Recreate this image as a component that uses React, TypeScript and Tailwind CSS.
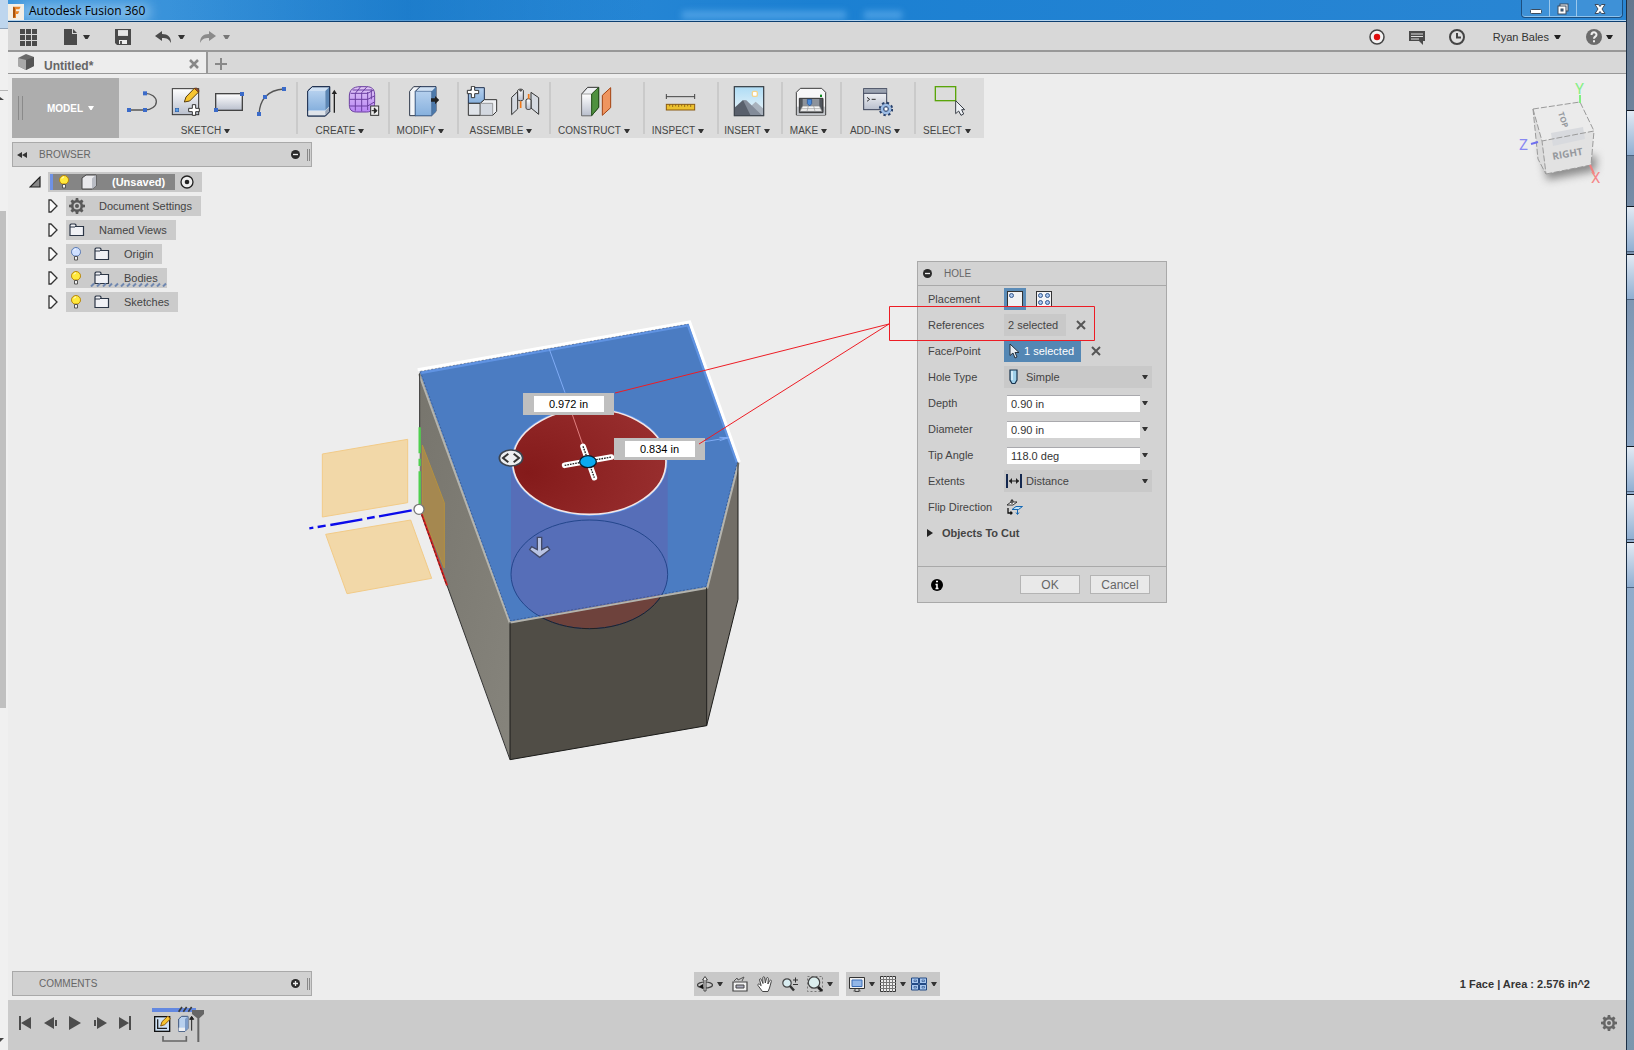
import React from 'react';

type IconProps = {
  box: string;
  className?: string;
  children: React.ReactNode;
};

const Icon = ({ box, className = 'w-8 h-8', children }: IconProps) => (
  <svg viewBox={box} className={`shrink-0 ${className}`} fill="none" aria-hidden="true">
    {children}
  </svg>
);

const Caret = ({ className = 'w-[6px] text-[#333]' }: { className?: string }) => (
  <svg viewBox="0 0 6 4" className={`shrink-0 ${className}`} aria-hidden="true">
    <path d="M0 0h6L3.6 4H2.4z" fill="currentColor" />
  </svg>
);

/* ---------- Toolbar icons ---------- */

const Dot = ({ x, y }: { x: number; y: number }) => (
  <rect x={x - 6} y={y - 6} width="12" height="12" fill="#3b6bc9" />
);

const LineIcon = () => (
  <Icon box="384 258 96 96">
    <path d="M390 330h48a34 25 0 0 0 0-50" stroke="#555" strokeWidth="4" />
    <Dot x={390} y={330} />
    <Dot x={438} y={330} />
    <Dot x={438} y={280} />
  </Icon>
);

const SketchIcon = () => (
  <Icon box="510 258 96 96">
    <rect x="517" y="266" width="79" height="78" fill="url(#metal)" stroke="#333" strokeWidth="3" />
    <rect x="526" y="325" width="10" height="10" fill="#5aa0e8" stroke="#2a5ea8" strokeWidth="2" />
    <path d="M553 306l5-15 25-26 13 11-27 27z" fill="#f7c530" stroke="#5a4010" strokeWidth="3" />
    <path d="M583 265l6-1 8 7-1 6z" fill="#a5522a" stroke="#5a3010" strokeWidth="2" />
    <path d="M577 314h10v11h11v10h-11v11h-10v-11h-11v-10h11z" fill="#fff" stroke="#333" strokeWidth="3" />
  </Icon>
);

const RectIcon = () => (
  <Icon box="639 258 96 96">
    <rect x="647" y="281" width="80" height="50" fill="url(#metal)" stroke="#444" strokeWidth="4" />
    <Dot x={648} y={330} />
    <Dot x={726} y={282} />
  </Icon>
);

const ArcIcon = () => (
  <Icon box="771 258 96 96">
    <path d="M780 341c2-24 8-38 18-50 14-15 34-23 57-24" stroke="#555" strokeWidth="4" />
    <Dot x={780} y={342} />
    <Dot x={798} y={291} />
    <Dot x={855} y={267} />
  </Icon>
);

const ExtrudeIcon = () => (
  <Icon box="912 258 96 96">
    <path d="M920 273l14-13h52v75l-13 13h-53z" fill="#cfe0f3" stroke="#1f3050" strokeWidth="3" />
    <path d="M920 273h53v58h-53z" fill="url(#blue)" />
    <path d="M973 273l13-13v58l-13 13z" fill="#5d87b5" />
    <path d="M920 333h53v14h-53z" fill="#dfe4ea" />
    <path d="M973 333l13-13v15l-13 13z" fill="#9aa5b5" />
    <path d="M920 273l14-13h52v75l-13 13h-53z" stroke="#1f3050" strokeWidth="3" />
    <path d="M1000 338v-62" stroke="#222" strokeWidth="4" />
    <path d="M992 282l8-13 8 13z" fill="#222" />
  </Icon>
);

const FormIcon = () => (
  <Icon box="1044 258 96 96">
    <path d="M1048 288c0-18 12-28 32-28h20c16 0 24 9 24 24v22c0 20-8 30-24 30h-30c-16 0-22-8-22-22z" fill="url(#purple)" stroke="#6b3fa0" strokeWidth="3" />
    <path d="M1066 280v52M1085 278v56M1049 298h54M1049 318h54M1103 276v54M1103 298l20-10M1103 318l20-12M1052 280h51l18-10M1066 280l16-20M1085 278l16-18M1114 268v30M1058 270h56" stroke="#6b3fa0" strokeWidth="3" />
    <rect x="1112" y="318" width="24" height="28" fill="#eee" stroke="#333" strokeWidth="3" />
    <path d="M1115 332h11M1123 324l8 8-8 8z" fill="#222" stroke="#222" strokeWidth="3" />
  </Icon>
);

const ModifyIcon = () => (
  <Icon box="1218 258 96 96">
    <path d="M1226 274l12-14h22l-15 14v73h-19z" fill="#f3f5f8" stroke="#2a3548" strokeWidth="3" />
    <path d="M1243 274l14-14h48v74l-13 13h-49z" fill="#cfe0f3" stroke="#1f3050" strokeWidth="3" />
    <path d="M1243 274h49v73h-49z" fill="url(#blue)" />
    <path d="M1292 274l13-14v74l-13 13z" fill="#4d79aa" />
    <path d="M1243 274h49v73h-49z" stroke="#3d5f8c" strokeWidth="2" />
    <path d="M1290 295h12v-7l13 12-13 13v-8h-12z" fill="#222" />
  </Icon>
);

const ComponentIcon = () => (
  <Icon box="1395 258 96 96">
    <path d="M1402 276l14-13h34v36l-12 11h-36z" fill="url(#blue)" stroke="#1f3050" strokeWidth="3" />
    <path d="M1402 310h36v36h-36z" fill="#dfe3e9" stroke="#333" strokeWidth="3" />
    <path d="M1438 310l12-11h37v35l-12 12h-37z" fill="#eef0f3" stroke="#333" strokeWidth="3" />
    <path d="M1438 310h37v36h-37z" fill="#d3d8e0" stroke="#777" strokeWidth="2" />
    <path d="M1411 259h10v12h12v10h-12v12h-10v-12h-12v-10h12z" fill="#fff" stroke="#333" strokeWidth="3" />
  </Icon>
);

const JointIcon = () => (
  <Icon box="27 78 96 96">
    <path d="M35 112l18-17v52l-18 17z" fill="#d5dae1" stroke="#333" strokeWidth="3" />
    <path d="M53 92c0-6 17-6 17 0v26c0 6-17 6-17 0z" fill="url(#metal)" stroke="#333" strokeWidth="3" />
    <circle cx="62" cy="91" r="4" fill="#555" />
    <path d="M93 97l23 16v50l-23-19z" fill="#d5dae1" stroke="#333" strokeWidth="3" />
    <path d="M78 120c0-5 15-5 15 0v24c0 6-15 6-15 0z" fill="url(#metal)" stroke="#333" strokeWidth="3" />
    <path d="M62 124v20M86 116v-14" stroke="#f07818" strokeWidth="5" />
  </Icon>
);

const ConstructIcon = () => (
  <Icon box="240 78 96 96">
    <path d="M245 102l18-20h33v60l-21 25h-30z" fill="#eef0f3" stroke="#333" strokeWidth="3" />
    <path d="M245 102h30v65h-30z" fill="url(#metal)" stroke="#777" strokeWidth="2" />
    <path d="M275 102l21-20v60l-21 25z" fill="#4f9140" stroke="#24501a" strokeWidth="3" />
    <path d="M307 106l25-23v60l-25 23z" fill="#ef9560" stroke="#a34312" strokeWidth="3" />
  </Icon>
);

const InspectIcon = () => (
  <Icon box="489 78 96 96">
    <path d="M496 110h85M496 102v15M581 102v15" stroke="#444" strokeWidth="3" />
    <rect x="496" y="133" width="85" height="17" fill="#ecc12f" stroke="#8a5a12" strokeWidth="3" />
    <path d="M506 134v5M515 134v7M524 134v5M533 134v7M542 134v5M551 134v7M560 134v5M569 134v7" stroke="#6b4510" strokeWidth="2" />
  </Icon>
);

const InsertIcon = () => (
  <Icon box="699 78 96 96">
    <rect x="703" y="80" width="88" height="87" fill="url(#sky)" stroke="#3c444c" strokeWidth="3" />
    <rect x="757" y="94" width="15" height="15" rx="4" fill="#fff" stroke="#f3d48c" strokeWidth="4" />
    <path d="M740 150l27-25 22 20v20h-50z" fill="#a9b2bd" />
    <path d="M705 142l24-22 52 46h-76z" fill="#59606c" />
    <path d="M729 120l10 1 46 44h-34z" fill="#848c99" />
    <rect x="703" y="80" width="88" height="87" stroke="#3c444c" strokeWidth="3" />
  </Icon>
);

const MakeIcon = () => (
  <Icon box="885 78 96 96">
    <path d="M889 97l12-12h64l12 12v68h-88z" fill="#f7f7f8" stroke="#3a3a3a" strokeWidth="3" />
    <path d="M891 140h84v25h-84z" fill="#c3c6cb" />
    <rect x="960" y="104" width="6" height="7" fill="#0d8a1e" />
    <path d="M898 115h71v43h-71z" fill="#50555c" stroke="#333" strokeWidth="3" />
    <path d="M908 117h50v22h-50z" fill="#8d939c" />
    <path d="M908 138h50l8 16h-66z" fill="#f4f4f4" stroke="#888" strokeWidth="2" />
    <path d="M922 118h13v13l-6 7-7-7z" fill="#4a8ad8" stroke="#1f4d90" strokeWidth="2" />
    <path d="M905 146h58M925 138l-4 16M941 138l4 16" stroke="#999" strokeWidth="2" />
  </Icon>
);

const Cog = ({ x, y, r, color }: { x: number; y: number; r: number; color: string }) => (
  <g stroke={color} fill="none">
    <circle cx={x} cy={y} r={r * 0.82} strokeWidth={r * 0.32} strokeDasharray={`${r * 0.322}`} />
    <circle cx={x} cy={y} r={r * 0.52} strokeWidth={r * 0.44} />
  </g>
);

const AddInsIcon = () => (
  <Icon box="1080 78 96 96">
    <rect x="1088" y="86" width="69" height="63" fill="url(#metal)" stroke="#3a4258" strokeWidth="3" />
    <path d="M1089 87h67v12h-67z" fill="#9aa2b0" />
    <path d="M1088 100h69" stroke="#3a4258" strokeWidth="3" />
    <path d="M1098 112l8 6-8 6M1112 118h12" stroke="#333" strokeWidth="3" />
    <Cog x={1155} y={147} r={22} color="#27406b" />
    <circle cx="1155" cy="147" r="12" fill="none" stroke="#9dbde6" strokeWidth="8" />
    <circle cx="1155" cy="147" r="6" fill="#fff" stroke="#27406b" strokeWidth="2" />
  </Icon>
);

const SelectIcon = () => (
  <Icon box="1296 78 96 96">
    <rect x="1303" y="80" width="61" height="42" stroke="#5aa50a" strokeWidth="4" />
    <path d="M1364 122v39l9-8 7 13 8-4-6-13h9z" fill="#eef1f5" stroke="#3a3f48" strokeWidth="3" />
  </Icon>
);

const groups = [
  { label: 'SKETCH', width: 'w-[177px]', icons: [LineIcon, SketchIcon, RectIcon, ArcIcon] },
  { label: 'CREATE', width: 'w-[92px]', icons: [ExtrudeIcon, FormIcon] },
  { label: 'MODIFY', width: 'w-[69px]', icons: [ModifyIcon] },
  { label: 'ASSEMBLE', width: 'w-[92px]', icons: [ComponentIcon, JointIcon] },
  { label: 'CONSTRUCT', width: 'w-[94px]', icons: [ConstructIcon] },
  { label: 'INSPECT', width: 'w-[74px]', icons: [InspectIcon] },
  { label: 'INSERT', width: 'w-[64px]', icons: [InsertIcon] },
  { label: 'MAKE', width: 'w-[59px]', icons: [MakeIcon] },
  { label: 'ADD-INS', width: 'w-[74px]', icons: [AddInsIcon] },
  { label: 'SELECT', width: 'w-[70px]', icons: [SelectIcon] },
];

const Gradients = () => (
  <svg className="absolute w-0 h-0" aria-hidden="true">
    <defs>
      <linearGradient id="metal" x1="0" y1="0" x2="0" y2="1">
        <stop offset="0" stopColor="#fff" />
        <stop offset="1" stopColor="#b9bfcd" />
      </linearGradient>
      <linearGradient id="blue" x1="0" y1="0" x2="0" y2="1">
        <stop offset="0" stopColor="#b5d0ee" />
        <stop offset="1" stopColor="#86b0dd" />
      </linearGradient>
      <linearGradient id="purple" x1="0" y1="0" x2="0" y2="1">
        <stop offset="0" stopColor="#e0c8f5" />
        <stop offset="1" stopColor="#b884f5" />
      </linearGradient>
      <linearGradient id="sky" x1="0" y1="0" x2="0" y2="1">
        <stop offset="0" stopColor="#aedcf5" />
        <stop offset="1" stopColor="#eef6fa" />
      </linearGradient>
      <linearGradient id="sideFace" x1="0" y1="0" x2="1" y2="1">
        <stop offset="0" stopColor="#77756d" />
        <stop offset="1" stopColor="#86847c" />
      </linearGradient>
      <radialGradient id="holeFace" cx="0.1" cy="0.6" r="1">
        <stop offset="0" stopColor="#841a1a" />
        <stop offset="1" stopColor="#9a3030" />
      </radialGradient>
    </defs>
  </svg>
);

/* ---------- Window chrome ---------- */

const TitleBar = () => (
  <div className="relative flex h-[22px] items-start justify-between overflow-hidden border-b border-[#0d3f70] bg-linear-to-r from-[#3f97dc] via-[#1b80d2] to-[#2a86d3] shadow-[inset_0_-1px_0_#b5d4ee]">
    <div className="absolute inset-y-0 left-[160px] w-[480px] bg-linear-to-r from-transparent via-[#1173c4]/60 to-transparent" />
    <div className="absolute left-[674px] top-[11px] h-2 w-[164px] bg-[#6bb4f0]/60 blur-[3px]" />
    <div className="absolute left-[856px] top-[11px] h-2 w-[38px] bg-[#6bb4f0]/60 blur-[3px]" />
    <div className="relative flex items-center">
      <div className="absolute left-3 top-1 h-4 w-[130px] bg-[#a9d2f3]/60 blur-[6px]" />
      <svg viewBox="0 0 48 48" className="relative mt-[3px] h-4 w-4" aria-hidden="true">
        <rect width="48" height="48" fill="#f3efe6" />
        <path d="M15 8h23l-4 8H24v6h10l-4 8h-6v12h-9z" fill="#e8852a" />
        <path d="M15 8l6 3v29l-6 2z" fill="#a8550f" />
      </svg>
      <h1 className="relative ml-[5px] mt-[2px] font-['Open_Sans',sans-serif] text-xs leading-[18px] text-black">Autodesk Fusion 360</h1>
    </div>
    <div className="relative mr-[3px] flex h-[18px] rounded-b-[4px] border border-t-0 border-[#1c4f80] bg-[#4d9adb]/60 shadow-[inset_0_-1px_0_#8fc3ec]">
      <button type="button" aria-label="Minimize" className="grid w-7 place-items-center border-r border-[#9bc8ec]">
        <svg viewBox="0 0 12 6" className="mt-1 h-[6px] w-3"><rect x=".5" y="1.500" width="11" height="4" rx="1" fill="#fff" stroke="#3b4a5c" /></svg>
      </button>
      <button type="button" aria-label="Restore" className="grid w-[27px] place-items-center border-r border-[#9bc8ec]">
        <svg viewBox="0 0 12 12" className="h-3 w-3" fill="none">
          <rect x="3" y="1" width="8" height="7" fill="#fff" stroke="#3b4a5c" />
          <rect x="1" y="3" width="8" height="8" fill="#fff" stroke="#3b4a5c" />
          <rect x="4" y="6" width="2" height="2" fill="#3a86c8" stroke="#3b4a5c" />
        </svg>
      </button>
      <button type="button" aria-label="Close" className="grid w-[45px] place-items-center">
        <svg viewBox="0 0 12 10" className="h-[10px] w-3">
          <path d="M1 .5h3.500l1.500 2 1.500-2H11L8 5l3 4.500H7.500L6 7.500l-1.500 2H1L4 5z" fill="#fff" stroke="#3b4a5c" />
        </svg>
      </button>
    </div>
  </div>
);

const MenuBar = () => (
  <header className="flex h-[30px] items-center justify-between border-b-2 border-[#989898] bg-[#d8d8d8] pl-3 pr-[13px] pt-[2px]">
    <div className="flex items-center text-[#4a4a4a]">
      <button type="button" aria-label="Data panel">
        <Icon box="0 0 17 17" className="h-[17px] w-[17px]">
          <path d="M0 0h5v5H0zM6 0h5v5H6zM12 0h5v5h-5zM0 6h5v5H0zM6 6h5v5H6zM12 6h5v5h-5zM0 12h5v5H0zM6 12h5v5H6zM12 12h5v5h-5z" fill="currentColor" />
        </Icon>
      </button>
      <button type="button" aria-label="File" className="ml-[27px] flex items-center gap-[6px]">
        <Icon box="0 0 13 16" className="h-4 w-[13px]">
          <path d="M0 0h8v5h5v11H0zM9 0l4 4H9z" fill="currentColor" />
        </Icon>
        <Caret className="w-[7px] text-[#333]" />
      </button>
      <button type="button" aria-label="Save" className="ml-[25px]">
        <Icon box="0 0 16 16" className="h-4 w-4">
          <path d="M0 0h16v16H2l-2-2zM3 1v6h10V1zM4 11v4h8v-4z" fill="currentColor" fillRule="evenodd" />
          <path d="M3 2h10v4H3z" fill="#e6e6e6" />
          <path d="M4 11h8v4H4z" fill="#eee" />
          <path d="M5 12h2v3H5z" fill="#555" />
        </Icon>
      </button>
      <button type="button" aria-label="Undo" className="ml-6 flex items-center gap-[7px]">
        <Icon box="0 0 16 12" className="h-3 w-4">
          <path d="M0 5l7-5v3c6 0 9 3 9 9-2-4-4-5-9-5v3z" fill="currentColor" />
        </Icon>
        <Caret className="w-[7px] text-[#333]" />
      </button>
      <button type="button" aria-label="Redo" className="ml-[15px] flex items-center gap-[7px] text-[#8a8a8a]">
        <Icon box="0 0 16 12" className="h-3 w-4">
          <path d="M16 5L9 0v3C3 3 0 6 0 12c2-4 4-5 9-5v3z" fill="currentColor" />
        </Icon>
        <Caret className="w-[7px] text-[#777]" />
      </button>
    </div>
    <div className="flex items-center text-[#4a4a4a]">
      <button type="button" aria-label="Record">
        <Icon box="0 0 16 16" className="h-4 w-4">
          <circle cx="8" cy="8" r="7" fill="#f3f3f3" stroke="#444" strokeWidth="1.500" />
          <circle cx="8" cy="8" r="3.200" fill="#e00d0d" />
        </Icon>
      </button>
      <button type="button" aria-label="Comments" className="ml-6">
        <Icon box="0 0 16 15" className="h-[15px] w-4">
          <path d="M0 1h16v10h-2v4l-4-4H0z" fill="currentColor" />
          <path d="M2 4h12M2 6.500h12M2 9h8" stroke="#ddd" />
        </Icon>
      </button>
      <button type="button" aria-label="Job status" className="ml-6">
        <Icon box="0 0 16 16" className="h-4 w-4">
          <circle cx="8" cy="8" r="7" fill="#e0e0e0" stroke="#444" strokeWidth="2" />
          <path d="M8 4v4.500h4" stroke="#444" strokeWidth="2" />
        </Icon>
      </button>
      <button type="button" className="ml-7 flex items-center gap-[5px] text-[11px] text-[#333]">
        Ryan Bales
        <Caret className="w-[7px] text-[#222]" />
      </button>
      <button type="button" aria-label="Help" className="ml-[25px] flex items-center gap-1">
        <svg viewBox="0 0 16 16" className="h-4 w-4" aria-hidden="true">
          <circle cx="8" cy="8" r="8" fill="#6b6b6b" />
          <path d="M5.500 6c0-3.500 5-3.500 5-.3 0 2-2.500 1.800-2.500 4M8 11.200v2" fill="none" stroke="#eee" strokeWidth="2" />
        </svg>
        <Caret className="w-[7px] text-[#222]" />
      </button>
    </div>
  </header>
);

const TabBar = () => (
  <div className="flex h-[22px] border-b border-[#989898] bg-[#d8d8d8]">
    <div className="flex w-[200px] items-center border-r-2 border-[#989898] bg-[#ededed] pl-[10px] pr-[7px] pt-[2px]">
      <Icon box="0 0 16 16" className="mb-1 h-4 w-4">
        <path d="M0 4l8-4 8 3v9l-8 4-8-4z" fill="#6a6a6a" />
        <path d="M0 4l8 2v10l-8-4z" fill="#a8a8a8" />
        <path d="M8 6l8-3v9l-8 4z" fill="#555" />
      </Icon>
      <span className="ml-[10px] mt-1 flex-1 text-xs leading-4 font-bold text-[#666]">Untitled*</span>
      <button type="button" aria-label="Close tab">
        <Icon box="0 0 10 10" className="h-[10px] w-[10px]">
          <path d="M1 1l8 8M9 1L1 9" stroke="#888" strokeWidth="2.500" />
        </Icon>
      </button>
    </div>
    <button type="button" aria-label="New tab" className="ml-[7px] pt-[2px]">
      <Icon box="0 0 12 12" className="h-3 w-3">
        <path d="M6 0v12M0 6h12" stroke="#888" strokeWidth="2" />
      </Icon>
    </button>
  </div>
);

const Toolbar = () => (
  <div className="mx-1 mt-1 flex h-[60px] self-start bg-[#dcdcdc]">
    <button type="button" className="flex w-[107px] items-center bg-[#adadad] pl-[6px] text-[10px] font-bold text-white">
      <span className="mr-6 h-6 w-[5px] border-x border-[#8a8a8a]" />
      MODEL
      <Caret className="ml-[5px] w-[6px] text-white" />
    </button>
    {groups.map(({ label, width, icons }, i) => (
      <section key={label} className={`relative flex flex-col items-center pt-2 ${width}`}>
        {i > 0 && <span className="absolute left-0 top-1 h-[52px] w-[2px] bg-[#cacaca]" />}
        <div className="flex gap-[11px]">
          {icons.map((ToolIcon, n) => (
            <button key={n} type="button" aria-label={`${label} tool ${n + 1}`}>
              <ToolIcon />
            </button>
          ))}
        </div>
        <button type="button" className="mt-[6px] flex items-center gap-[3px] pr-1 text-[10px] leading-[14px] text-[#444]">
          {label}
          <Caret />
        </button>
      </section>
    ))}
  </div>
);

/* ---------- Browser tree ---------- */

const Grip = () => <span className="h-3 w-[3px] border-x border-[#888]" />;

const RoundSign = ({ plus = false, className = 'h-[9px] w-[9px]' }: { plus?: boolean; className?: string }) => (
  <Icon box="0 0 9 9" className={className}>
    <circle cx="4.500" cy="4.500" r="4.500" fill="#2b2b2b" />
    <path d={plus ? 'M2 4.500h5M4.500 2v5' : 'M2 4.500h5'} stroke="#eee" strokeWidth="1.300" />
  </Icon>
);

const Bulb = ({ off = false }: { off?: boolean }) => (
  <Icon box="0 0 10 14" className="h-[14px] w-[10px]">
    <path d="M3 9C1 7.500.500 6.500.500 4.800a4.500 4.300 0 0 1 9 0C9.500 6.500 9 7.500 7 9z" fill={off ? '#cfe0ff' : '#ffe93d'} stroke={off ? '#5d7db5' : '#b8860b'} />
    <path d="M3.500 9.500h3v3.500h-3z" fill="#f2f2f2" stroke="#555" />
    <path d="M3 3.500c.5-1 1-1.500 2-1.500" stroke="#fff" />
  </Icon>
);

const Folder = () => (
  <Icon box="0 0 16 14" className="h-[14px] w-4">
    <path d="M1 12.500V2l1-1h4l1 1v1.500h7.500v9z" fill="#f0f1f5" stroke="#2c3646" strokeWidth="1.200" />
    <path d="M1 4h5l1-1" stroke="#2c3646" />
  </Icon>
);

const Gear = ({ className = 'h-4 w-4', color = '#5a5a5a' }: { className?: string; color?: string }) => (
  <Icon box="0 0 16 16" className={className}>
    <path
      d="M6.800 0h2.400l.4 2.200 1.300.5L12.700 1.500l1.800 1.800-1.200 1.800.5 1.300 2.200.4v2.400l-2.200.4-.5 1.300 1.200 1.800-1.800 1.800-1.800-1.200-1.300.5-.4 2.200H6.800l-.4-2.200-1.300-.5-1.800 1.200-1.800-1.800 1.200-1.800-.5-1.300L0 9.200V6.800l2.200-.4.5-1.300L1.500 3.300l1.800-1.800 1.800 1.200 1.300-.5zM8 4.500a3.500 3.500 0 1 0 0 7 3.500 3.500 0 0 0 0-7z"
      fill={color}
      fillRule="evenodd"
    />
    <circle cx="8" cy="8" r="2" fill={color} />
  </Icon>
);

const Expander = () => (
  <button type="button" aria-label="Expand">
    <Icon box="0 0 10 14" className="h-[14px] w-[10px]">
      <path d="M1 1h2l6 6-6 6H1z" fill="#fafafa" stroke="#333" strokeWidth="1.300" />
    </Icon>
  </button>
);

const treeRows = [
  { name: 'Document Settings', icon: 'gear' },
  { name: 'Named Views', icon: 'folder' },
  { name: 'Origin', icon: 'folder', bulb: 'off' },
  { name: 'Bodies', icon: 'folder', bulb: 'on', edited: true },
  { name: 'Sketches', icon: 'folder', bulb: 'on' },
];

const Hatch = () => (
  <svg className="absolute bottom-px left-6 h-[5px] w-[77px]" viewBox="0 0 77 5" aria-hidden="true">
    {[...Array(13)].map((_, i) => (
      <path key={i} d={`M${1 + i * 6} 4.500l3-3`} stroke="#6f87b0" strokeWidth="2" />
    ))}
  </svg>
);

const Browser = () => (
  <aside className="ml-1 mt-1 w-[300px] text-[11px] text-[#444]">
    <div className="flex h-[25px] items-center border border-[#a9a9a9] bg-[#d1d1d1] pl-1 pr-[1px]">
      <button type="button" aria-label="Collapse browser">
        <Icon box="0 0 10 6" className="h-[6px] w-[10px]">
          <path d="M5 0v6L0 3zM10 0v6L5 3z" fill="#333" />
        </Icon>
      </button>
      <h2 className="ml-3 flex-1 text-[10px] text-[#666]">BROWSER</h2>
      <button type="button" aria-label="Minimize browser" className="mr-[7px]"><RoundSign /></button>
      <Grip />
    </div>
    <div className="mt-[5px] flex items-center pl-[17px]">
      <button type="button" aria-label="Collapse" className="mr-[7px]">
        <Icon box="0 0 12 12" className="h-3 w-3">
          <path d="M11 1v10H1z" fill="#888" stroke="#222" strokeWidth="1.200" />
        </Icon>
      </button>
      <div className="flex h-5 items-center bg-[#c9c9c9] pl-[2px] pr-2">
        <div className="flex h-4 items-center border-l-3 border-[#6f92e6] bg-[#858585] pl-[6px] pr-[10px]">
          <Bulb />
          <Icon box="0 0 16 16" className="ml-3 h-4 w-4">
            <path d="M1 4l4-3h10v11l-4 3H1z" fill="#e9e9ec" stroke="#444" />
            <path d="M11 4.500l4-3.500v11l-4 3z" fill="#b9bcc4" />
          </Icon>
          <span className="ml-[15px] font-bold text-white">(Unsaved)</span>
        </div>
        <button type="button" aria-label="Activate component" className="ml-[5px]">
          <Icon box="0 0 14 14" className="h-[14px] w-[14px]">
            <circle cx="7" cy="7" r="6" fill="#eee" stroke="#222" strokeWidth="1.300" />
            <circle cx="7" cy="7" r="2.300" fill="#222" />
          </Icon>
        </button>
      </div>
    </div>
    <ul className="mt-1 flex flex-col gap-1 pl-9">
      {treeRows.map((row) => (
        <li key={row.name} className="flex items-center gap-2">
          <Expander />
          <div className="relative flex h-5 items-center bg-[#cbcbcb] pl-[3px] pr-[9px]">
            {row.bulb && (
              <button type="button" aria-label={`Toggle ${row.name}`} className="ml-[2px] mr-[13px]">
                <Bulb off={row.bulb === 'off'} />
              </button>
            )}
            {row.icon === 'gear' ? <Gear /> : <Folder />}
            <span className="ml-[14px]">{row.name}</span>
            {row.edited && <Hatch />}
          </div>
        </li>
      ))}
    </ul>
  </aside>
);

/* ---------- Canvas scene ---------- */

const Scene = () => (
  <svg viewBox="0 0 1380 1380" className="absolute left-[292px] top-[236px] h-[460px] w-[460px]" fill="none" aria-hidden="true">
    {/* origin planes */}
    <path d="M67 432l256-44v190L67 621z" fill="#f2d8a8" stroke="#f2cb88" strokeWidth="3" />
    <path d="M77 673l255-43 63 175-254 46z" fill="#f2d8a8" stroke="#f2cb88" strokeWidth="3" />
    {/* body */}
    <path d="M359 185l271 750v413L359 600z" fill="url(#sideFace)" />
    <path d="M630 935l590-104v416l-590 102z" fill="#504d46" />
    <path d="M1220 831l94-375v412l-94 379z" fill="#726e67" />
    <path d="M367 405l66 173v196l-66-162z" fill="#a58850" stroke="#b5913f" strokeWidth="3" />
    <path d="M359 185l808-144 147 415-94 375-590 104z" fill="#4b7cc2" />
    <path d="M361 189l803-143 147 412" stroke="#6093e2" strokeWidth="7" />
    {/* hole preview */}
    <path d="M633 455v338a235 163 0 0 0 470 0V455z" fill="#5a6ab4" fillOpacity=".75" />
    <clipPath id="frontFace"><path d="M630 935l590-104v416l-590 102z" /></clipPath>
    <ellipse cx="868" cy="793" rx="235" ry="163" fill="#6e423c" clipPath="url(#frontFace)" />
    <ellipse cx="868" cy="793" rx="235" ry="163" stroke="#23468c" strokeWidth="3" />
    <ellipse cx="868" cy="793" rx="235" ry="163" stroke="#222" strokeWidth="3" clipPath="url(#frontFace)" />
    <ellipse cx="868" cy="455" rx="235" ry="163" fill="#5b93ea" />
    <ellipse cx="868" cy="455" rx="230" ry="158" fill="url(#holeFace)" stroke="#f4e6e4" strokeWidth="5" />
    {/* edges */}
    <path d="M353 179l816-143 149 420" stroke="#fff" strokeWidth="9" />
    <path d="M357 192l272 746 593-104 94-376" stroke="#b4b4ae" strokeWidth="6" />
    <path d="M361 185l270 747 587-103 94-373M361 184l804-142" stroke="#23355a" strokeOpacity=".6" strokeWidth="2" strokeDasharray="6 5" />
    <path d="M630 937v412l590-102V833M1314 458v410l-94 379" stroke="#1c1c1a" strokeWidth="3" />
    <path d="M359 190v170M441 826l189 523" stroke="#333" strokeWidth="3" />
    {/* axes */}
    <path d="M359 352v78M359 446v22M359 484v98" stroke="#4fd04f" strokeWidth="7" />
    <path d="M365 612l76 214" stroke="#d81e1e" strokeWidth="6" />
    <path d="M365 615l76 214" stroke="#222" strokeWidth="2" strokeDasharray="8 6" />
    <path d="M335 601l-98 18M224 621l-23 4M187 628l-96 17M77 647l-24 4M40 653l-12 2" stroke="#0b0bea" strokeWidth="7" />
    <circle cx="357" cy="598" r="15" fill="#fff" stroke="#777" strokeWidth="4" />
    {/* reference lines */}
    <path d="M747 115l48 133" stroke="#7fabf5" strokeWidth="3" />
    <path d="M817 314l32 92" stroke="#e08080" strokeWidth="3" />
    <path d="M1214 395l72-12M1258 382l28 1-27 9" stroke="#7fabf5" strokeWidth="3" />
    {/* move manipulator */}
    <path d="M849 409l34 94M794 466l140-25" stroke="#fff" strokeWidth="17" strokeLinecap="round" />
    <path d="M849 409l34 94M794 466l140-25" stroke="#222" strokeWidth="4" strokeDasharray="5 3" />
    <ellipse cx="864" cy="455" rx="25" ry="18" fill="#09a9f0" stroke="#0a1a28" strokeWidth="4" />
    {/* diameter handle */}
    <ellipse cx="633" cy="444" rx="35" ry="24" fill="#eceef0" stroke="#3c4450" strokeWidth="5" />
    <path d="M625 431l-16 13 16 13M641 431l16 13-16 13" stroke="#333" strokeWidth="6" />
    {/* depth handle */}
    <path d="M712 682h13v37l18-9 6 9-30 23-30-23 6-9 17 9z" fill="#b9c4e4" stroke="#434a68" strokeWidth="4" />
  </svg>
);

const ViewCube = () => (
  <svg viewBox="0 0 90 110" className="absolute right-[21px] top-[6px] h-[110px] w-[90px]" fill="none" aria-label="View cube">
    <path d="M26 66l6 34 48-9 2-14z" fill="#8a8a8a" className="blur-[4px]" />
    <path d="M18 29l47-7 14 29-52 10z" fill="#ebebeb" />
    <path d="M18 29l9 32 4 33-8-15z" fill="#dcdcdc" />
    <path d="M27 61l52-10-3 34-45 9z" fill="#e2e2e2" />
    <path d="M36 53l32-6 2 12-32 7z" fill="#d8dade" />
    <path d="M18 29l47-7 14 29-52 10zM18 29l5 50 8 15-4-33M31 94l45-9 3-34" stroke="#9a9a9a" strokeDasharray="6 2" />
    <path d="M65 15v8" stroke="#80f080" strokeWidth="2" />
    <path d="M16 64l7-2" stroke="#7070f0" strokeWidth="2" />
    <path d="M75 85l4 9" stroke="#f08080" strokeWidth="2" />
    <g className="font-[Roboto,sans-serif] text-[15px]">
      <text x="60" y="14" fill="#86f086">Y</text>
      <text x="4" y="70" fill="#8888f2">Z</text>
      <text x="76" y="103" fill="#f58888">X</text>
    </g>
    <g className="font-['Open_Sans',sans-serif] font-bold" fill="#96999e">
      <text className="text-[8px]" transform="translate(43 33) rotate(72)">TOP</text>
      <text className="text-[10px]" transform="translate(38 80) rotate(-10)">RIGHT</text>
    </g>
  </svg>
);

const DimensionInput = ({ label, value, place }: { label: string; value: string; place: string }) => (
  <div className={`absolute flex h-[22px] w-[91px] items-center justify-center bg-[#bfbfbf] ${place}`}>
    <input aria-label={label} defaultValue={value} className="h-4 w-[70px] bg-white text-center text-[11px] text-black" />
  </div>
);

const Callout = () => (
  <svg viewBox="0 0 500 160" className="pointer-events-none absolute left-[600px] top-[226px] h-[160px] w-[500px]" fill="none" stroke="#ed1c24" aria-hidden="true">
    <path d="M281.500 6.500h205v34h-205zM281 24L7 93M281 24l-190 120" />
  </svg>
);

/* ---------- Hole dialog ---------- */

const CrossButton = ({ label }: { label: string }) => (
  <button type="button" aria-label={label} className="ml-[10px]">
    <Icon box="0 0 10 10" className="h-[10px] w-[10px]">
      <path d="M1 1l8 8M9 1L1 9" stroke="#555" strokeWidth="2" />
    </Icon>
  </button>
);

const Row = ({ label, htmlFor, children }: { label: string; htmlFor?: string; children: React.ReactNode }) => (
  <div className="flex h-[26px] items-center pl-[10px] pr-[14px]">
    {htmlFor ? <label htmlFor={htmlFor} className="w-[76px] shrink-0">{label}</label> : <span className="w-[76px] shrink-0">{label}</span>}
    {children}
  </div>
);

const ValueField = ({ id, value }: { id: string; value: string }) => (
  <div className="flex min-w-0 flex-1 items-center gap-[2px] pl-[3px] pr-1">
    <input id={id} defaultValue={value} className="h-[17px] min-w-0 flex-1 border-t border-[#a9a9ad] bg-white px-1 text-[11px] text-[#333]" />
    <button type="button" aria-label="Value options"><Caret /></button>
  </div>
);

const Dropdown = ({ id, value, children }: { id: string; value: string; children: React.ReactNode }) => (
  <div className="relative flex h-[22px] flex-1 items-center bg-[#c9c9c9]">
    <span className="absolute left-[2px]">{children}</span>
    <select id={id} defaultValue={value} className="h-full w-full appearance-none pl-[22px] text-[11px] text-[#444]">
      <option>{value}</option>
    </select>
    <span className="pointer-events-none absolute right-1 flex"><Caret /></span>
  </div>
);

const HoleDialog = () => (
  <form className="absolute left-[909px] top-[187px] w-[250px] border border-[#a9a9a9] bg-[#d3d3d3] text-[11px] text-[#444]">
    <div className="flex h-6 items-center border-b border-[#a9a9a9] pl-[5px]">
      <RoundSign />
      <h2 className="ml-3 text-[10px] text-[#666]">HOLE</h2>
    </div>
    <Row label="Placement">
      <button type="button" aria-label="At point" aria-pressed="true" className="grid h-[22px] w-[22px] place-items-center bg-[#5b8cb8]">
        <Icon box="0 0 16 16" className="h-4 w-4">
          <rect x=".5" y=".5" width="15" height="15" fill="#f0f1f4" stroke="#333" />
          <circle cx="4.500" cy="4.500" r="2" fill="#a9c6ee" stroke="#35588c" />
        </Icon>
      </button>
      <button type="button" aria-label="From sketch" className="ml-[10px]">
        <Icon box="0 0 16 16" className="h-4 w-4">
          <rect x=".5" y=".5" width="15" height="15" fill="#f4f4f6" stroke="#333" />
          <g fill="#a9c6ee" stroke="#35588c">
            <circle cx="4.500" cy="4.500" r="2" />
            <circle cx="11.500" cy="4.500" r="2" />
            <circle cx="4.500" cy="11.500" r="2" />
            <circle cx="11.500" cy="11.500" r="2" />
          </g>
        </Icon>
      </button>
    </Row>
    <Row label="References">
      <button type="button" className="h-[22px] w-[62px] bg-[#c9c9c9] pl-1 text-left">2 selected</button>
      <CrossButton label="Clear references" />
    </Row>
    <Row label="Face/Point">
      <button type="button" className="flex h-[22px] w-[77px] items-center gap-1 bg-[#5487b4] pl-[5px] text-white">
        <Icon box="0 0 11 16" className="h-4 w-[11px]">
          <path d="M1 1v11.500l3-2.500 2 5 2-1-2-4.500h4z" fill="#e8eef4" stroke="#27323e" />
        </Icon>
        1 selected
      </button>
      <CrossButton label="Clear face" />
    </Row>
    <Row label="Hole Type" htmlFor="hole-type">
      <Dropdown id="hole-type" value="Simple">
        <Icon box="0 0 16 16" className="h-4 w-4">
          <path d="M4 1h7v10l-2 3.500H6L4 11z" fill="#9fd0ea" stroke="#17324d" strokeWidth="1.200" />
          <path d="M6 2v9" stroke="#e4f4fc" strokeWidth="1.500" />
        </Icon>
      </Dropdown>
    </Row>
    <Row label="Depth" htmlFor="depth"><ValueField id="depth" value="0.90 in" /></Row>
    <Row label="Diameter" htmlFor="diameter"><ValueField id="diameter" value="0.90 in" /></Row>
    <Row label="Tip Angle" htmlFor="tip-angle"><ValueField id="tip-angle" value="118.0 deg" /></Row>
    <Row label="Extents" htmlFor="extents">
      <Dropdown id="extents" value="Distance">
        <Icon box="0 0 16 16" className="h-4 w-4">
          <path d="M1 1v14M15 1v14" stroke="#14284f" strokeWidth="2" />
          <path d="M3 8h10" stroke="#222" />
          <path d="M6 5L3 8l3 3zM10 5l3 3-3 3z" fill="#222" />
        </Icon>
      </Dropdown>
    </Row>
    <Row label="Flip Direction">
      <button type="button" aria-label="Flip direction" className="ml-[3px]">
        <Icon box="0 0 16 16" className="h-4 w-4">
          <path d="M0 6l4-3h6l-4 3z" fill="#fff" stroke="#333" />
          <path d="M5 5V1M3.500 2.500L5 .5l1.500 2" stroke="#222" />
          <path d="M5 10.500l4-3h6.500l-4 3z" fill="#bfe3f8" stroke="#1467b3" />
          <path d="M10.500 11v4M9 13.500l1.500 2 1.500-2" stroke="#1467b3" />
          <path d="M1 9v5h4M3.500 12.500L5 14l-1.500 1.500" stroke="#111" strokeWidth="1.300" />
        </Icon>
      </button>
    </Row>
    <button type="button" className="flex h-[26px] items-center gap-[9px] pl-[9px] font-bold">
      <Icon box="0 0 6 8" className="h-2 w-[6px]"><path d="M0 0l6 4-6 4z" fill="#222" /></Icon>
      Objects To Cut
    </button>
    <div className="mt-5 flex h-9 items-center border-t border-[#a9a9a9] pl-[13px] pr-4">
      <button type="button" aria-label="Information">
        <Icon box="0 0 12 12" className="h-3 w-3">
          <circle cx="6" cy="6" r="6" fill="#000" />
          <path d="M5 2.500h2M4.500 5.500H6v4M4.500 9.500h3" stroke="#fff" strokeWidth="1.500" />
        </Icon>
      </button>
      <button type="button" className="ml-auto h-[19px] w-[60px] border border-[#b4b4b4] bg-[#e9e9e9] text-xs leading-4 text-[#666]">OK</button>
      <button type="button" className="ml-[10px] h-[19px] w-[60px] border border-[#b4b4b4] bg-[#e9e9e9] text-xs leading-4 text-[#666]">Cancel</button>
    </div>
  </form>
);

/* ---------- Bottom bars ---------- */

const NavButton = ({ label, caret, children }: { label: string; caret?: boolean; children: React.ReactNode }) => (
  <button type="button" aria-label={label} className="flex items-center gap-1">
    <Icon box="0 0 16 16" className="h-4 w-4">{children}</Icon>
    {caret && <Caret />}
  </button>
);

const NavBar = () => (
  <nav className="flex gap-[7px]">
    <div className="flex h-6 w-[145px] items-center gap-[9px] bg-[#c8c8c8] pl-[3px]">
      <NavButton label="Orbit" caret>
        <ellipse cx="8" cy="9" rx="7.500" ry="3" stroke="#444" strokeWidth="1.200" />
        <path d="M7 15V4H5.500L8 .5 10.500 4H9v11z" fill="#eee" stroke="#444" />
        <path d="M6 8v5l-4-2.500z" fill="#111" />
      </NavButton>
      <NavButton label="Look at">
        <path d="M1 6h14v9H1z" fill="#f2f2f2" stroke="#444" strokeWidth="1.200" />
        <path d="M4 9h8v3H4z" fill="#aab" stroke="#444" />
        <path d="M2 5l3-3 1 2 6-3-2 4" stroke="#555" />
      </NavButton>
      <NavButton label="Pan">
        <path d="M5.500 15.500L1 9.500c-.8-1.500 1-2 2-.8l1.200 1L2.600 4c-.2-1.500 1.300-1.700 1.800-.4L6 7.500 5.800 1.800c.1-1.500 1.700-1.400 1.900 0L8.300 7l1.200-4.700c.4-1.300 1.900-1 1.800.4L10.900 8l1.700-3.300c.7-1.200 2-.6 1.700.7L12.500 12l-1.500 3.500z" fill="#fff" stroke="#444" />
      </NavButton>
      <NavButton label="Zoom">
        <circle cx="5" cy="7" r="4.200" fill="#d8ecf0" stroke="#444" strokeWidth="1.200" />
        <path d="M8 10l4 4.500" stroke="#333" strokeWidth="2.500" />
        <path d="M11 4h5M13.500 1.500v5M11 8.500h5" stroke="#333" />
      </NavButton>
      <NavButton label="Fit" caret>
        <path d="M.5.500h15v15H.5z" stroke="#777" strokeDasharray="2 2" />
        <circle cx="7" cy="6.500" r="5.700" fill="#dceeee" stroke="#444" strokeWidth="1.200" />
        <path d="M11 11l4 4" stroke="#222" strokeWidth="2.800" />
      </NavButton>
    </div>
    <div className="flex h-6 w-[94px] items-center justify-between bg-[#c8c8c8] px-[3px]">
      <NavButton label="Display settings" caret>
        <path d="M.5 1.500h15v11H.5z" fill="#f0f0f0" stroke="#333" />
        <path d="M3 4h10v6.500H3z" fill="#93b7e8" stroke="#3a6cb5" />
        <path d="M6 13v2H4.500M10 13v2h1.500M6 15.500h4" stroke="#444" />
      </NavButton>
      <NavButton label="Grid and snaps" caret>
        <path d="M.5.500h15v15H.5z" fill="#eee" stroke="#333" />
        <path d="M3.500 0v16M6.500 0v16M9.500 0v16M12.500 0v16M0 3.500h16M0 6.500h16M0 9.500h16M0 12.500h16" stroke="#777" />
      </NavButton>
      <NavButton label="Viewports" caret>
        <g fill="#a9c7ee" stroke="#234a85">
          <path d="M.5 2h7v5.500h-7zM8.500 2h7v5.500h-7zM.5 8.500h7V14h-7zM8.500 8.500h7V14h-7z" />
          <path d="M3 4h2.500v1.500H3zM11 4h2.500v1.500H11zM3 10.500h2.500V12H3zM11 10.500h2.500V12H11z" strokeWidth=".6" />
        </g>
      </NavButton>
    </div>
  </nav>
);

const BottomRow = () => (
  <div className="mx-1 mb-1 mt-auto grid grid-cols-[1fr_auto_1fr] items-end">
    <div className="flex h-[25px] w-[300px] items-center border border-[#a9a9a9] bg-[#d1d1d1] pl-[26px] pr-[1px]">
      <h2 className="flex-1 text-[10px] text-[#666]">COMMENTS</h2>
      <button type="button" aria-label="Expand comments" className="mr-[7px]"><RoundSign plus /></button>
      <Grip />
    </div>
    <NavBar />
    <p className="pb-1 pr-8 text-right text-[11px] leading-4 font-bold text-[#333]">1 Face | Area : 2.576 in^2</p>
  </div>
);

const playback = [
  { label: 'Go to start', d: 'M0 1h2v14H0zM12 2v12L2 8z' },
  { label: 'Step back', d: 'M10 2v12L0 8zM11 5h2v6h-2z' },
  { label: 'Play', d: 'M0 1l12 7-12 7z' },
  { label: 'Step forward', d: 'M3 2l10 6-10 6zM0 5h2v6H0z' },
  { label: 'Go to end', d: 'M0 2l10 6-10 6zM10 1h2v14h-2z' },
];

const Timeline = () => (
  <footer className="flex h-[50px] items-center bg-[#cbcbcb] pl-[11px] pr-[9px]">
    <div className="flex gap-3 pb-1">
      {playback.map(({ label, d }) => (
        <button key={label} type="button" aria-label={label}>
          <Icon box="0 0 13 16" className="h-4 w-[13px]"><path d={d} fill="#4d4d4d" /></Icon>
        </button>
      ))}
    </div>
    <svg viewBox="456 138 156 114" className="ml-5 h-[38px] w-[52px]" fill="none" aria-label="Timeline features">
      <path d="M456 144h132v12H456z" fill="#6388e0" />
      <path d="M536 155l10-14M550 155l10-14M565 155l10-14" stroke="#3c3c3c" strokeWidth="5" />
      <rect x="464" y="170" width="45" height="44" fill="#cfe3f7" stroke="#111" strokeWidth="4" />
      <path d="M473 178v27h28" stroke="#222" strokeWidth="4" />
      <path d="M482 198l4-13 18-17 7 9-17 17z" fill="#f7c530" stroke="#8a5a10" strokeWidth="3" />
      <path d="M536 177l9-8h19v36l-9 9h-19z" fill="#b8d0ee" stroke="#3d557c" strokeWidth="3" />
      <path d="M536 203h19v10h-19z" fill="#eef0f3" />
      <path d="M555 177l9-8v36l-9 9z" fill="#7d9cc8" />
      <path d="M575 212v-38M569 178l6-9 6 9z" fill="#222" stroke="#222" strokeWidth="3" />
      <path d="M576 150h36v12l-14 13v71h-6v-71l-16-13z" fill="#666" />
      <path d="M489 228v15h70v-15" stroke="#666" strokeWidth="5" />
    </svg>
    <button type="button" aria-label="Preferences" className="ml-auto pb-1"><Gear color="#666" /></button>
  </footer>
);

/* ---------- Neighbouring windows at the screen edges ---------- */

const edgeTiles = ['mt-[110px]', 'mt-[50px]', 'mt-[2px]', 'mt-[146px]', 'mt-[2px]', 'mt-[2px]'];

const LeftEdge = () => (
  <div className="flex w-2 shrink-0 flex-col bg-[#f0f0f0]">
    <div className="h-[29px] border-b border-[#8fa3ba] bg-[#bed6ee]" />
    <div className="h-[62px] border-b border-[#b5b5b5]" />
    <Icon box="0 0 4 4" className="mt-[6px] h-1 w-1"><path d="M0 0l4 3H0z" fill="#444" /></Icon>
    <div className="mt-[110px] h-[497px] w-[6px] bg-[#c0c0c0]" />
    <Icon box="0 0 4 4" className="mb-2 mt-auto h-1 w-1"><path d="M0 0h4L0 4z" fill="#444" /></Icon>
  </div>
);

const RightEdge = () => (
  <div className="w-2 shrink-0 border-l border-[#1c2f45] bg-linear-to-b from-[#64778e] via-[#93afd0] to-[#7b96ad]">
    {edgeTiles.map((gap, i) => (
      <div key={i} className={`h-[46px] border-b border-t border-b-[#4d6480] border-t-[#10161e] bg-linear-to-b from-[#e2eaf3] to-[#90afd2] ${gap}`} />
    ))}
  </div>
);

const App = () => (
  <div className="flex min-h-screen bg-[#ededed] font-['Liberation_Sans',Arial,sans-serif]">
    <Gradients />
    <LeftEdge />
    <div className="flex min-w-0 flex-1 flex-col">
      <TitleBar />
      <MenuBar />
      <TabBar />
      <main className="relative flex flex-1 flex-col">
        <Scene />
        <Toolbar />
        <Browser />
        <ViewCube />
        <DimensionInput label="Vertical offset" value="0.972 in" place="left-[515px] top-[319px]" />
        <DimensionInput label="Horizontal offset" value="0.834 in" place="left-[606px] top-[364px]" />
        <HoleDialog />
        <Callout />
        <BottomRow />
      </main>
      <Timeline />
    </div>
    <RightEdge />
  </div>
);

export default App;
